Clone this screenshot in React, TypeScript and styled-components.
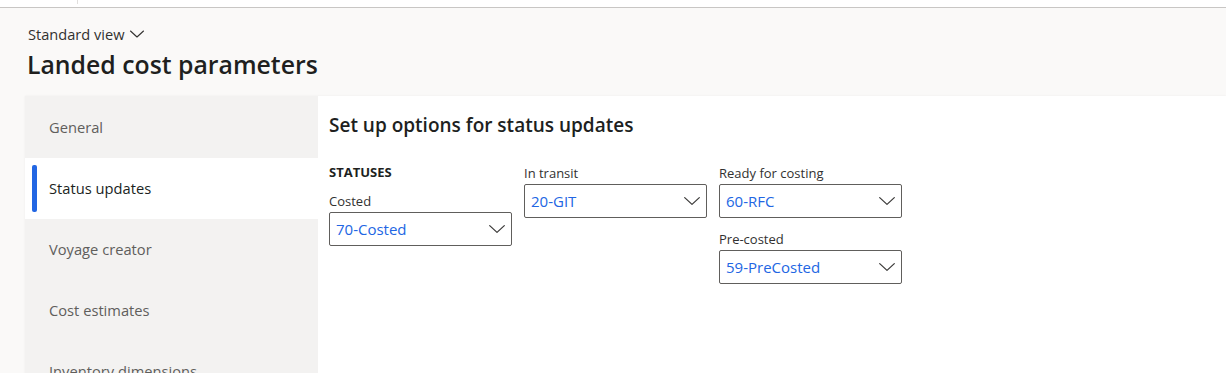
import React from 'react'
import styled, { createGlobalStyle } from 'styled-components'

const GlobalStyle = createGlobalStyle`
  html, body {
    margin: 0;
    padding: 0;
    background: #faf9f8;
    font-family: "Open Sans", "Noto Sans", sans-serif;
    color: #323130;
  }
  * { box-sizing: border-box; }
`

const tabs = ['General', 'Status updates', 'Voyage creator', 'Cost estimates', 'Inventory dimensions']

function Chevron({ size = 14, color = '#605e5c' }: { size?: number; color?: string }) {
  return (
    <svg width={size} height={size} viewBox="0 0 16 16" fill="none">
      <path d="M1.5 5 L8 11 L14.5 5" stroke={color} strokeWidth="1.1" strokeLinecap="round" strokeLinejoin="round" />
    </svg>
  )
}

interface IFieldProps {
  label: string
  value: string
}

function Field({ label, value }: IFieldProps) {
  return (
    <FieldWrap>
      <Label>{label}</Label>
      <Select>
        <span>{value}</span>
        <Chevron size={18} color="#3b3a39" />
      </Select>
    </FieldWrap>
  )
}

export default function App() {
  return (
    <Page>
      <GlobalStyle />
      <TopStrip>
        <Divider />
      </TopStrip>
      <Header>
        <ViewPicker>
          Standard view <Chevron size={16} color="#323130" />
        </ViewPicker>
        <Title>Landed cost parameters</Title>
      </Header>
      <Card>
        <Sidebar>
          {tabs.map((t, i) => (
            <Tab key={t} active={i === 1}>{t}</Tab>
          ))}
        </Sidebar>
        <Content>
          <SectionTitle>Set up options for status updates</SectionTitle>
          <Columns>
            <Column>
              <GroupTitle>STATUSES</GroupTitle>
              <Field label="Costed" value="70-Costed" />
            </Column>
            <Column>
              <Field label="In transit" value="20-GIT" />
            </Column>
            <Column>
              <Field label="Ready for costing" value="60-RFC" />
              <Field label="Pre-costed" value="59-PreCosted" />
            </Column>
          </Columns>
        </Content>
      </Card>
    </Page>
  )
}

const Page = styled.div`
  width: 1226px;
  height: 373px;
  overflow: hidden;
  display: flex;
  flex-direction: column;
`
const TopStrip = styled.div`
  height: 8px;
  background: #ffffff;
  border-bottom: 1px solid #c8c6c4;
  flex-shrink: 0;
  padding-left: 77px;
`
const Divider = styled.div`
  width: 1px;
  height: 4px;
  background: #e1dfdd;
`
const Header = styled.div`
  padding: 16px 0 0 27px;
  height: 88px;
  flex-shrink: 0;
`
const ViewPicker = styled.div`
  display: flex;
  align-items: center;
  gap: 5px;
  font-size: 14.6px;
  line-height: 20px;
  color: #323130;
  padding-left: 1px;
`
const Title = styled.h1`
  margin: 4px 0 0 0;
  font-size: 24.8px;
  line-height: 32px;
  font-weight: 600;
  color: #201f1e;
`
const Card = styled.div`
  flex: 1;
  margin-left: 25px;
  display: flex;
  background: #ffffff;
  box-shadow: 0 0 2px rgba(0, 0, 0, 0.06);
`
const Sidebar = styled.nav`
  width: 293px;
  background: #f3f2f1;
  display: flex;
  flex-direction: column;
  padding-top: 1px;
`
const Tab = styled.div<{ active?: boolean }>`
  position: relative;
  height: 61px;
  flex-shrink: 0;
  display: flex;
  align-items: center;
  padding-left: 24px;
  padding-bottom: 1px;
  font-size: 14.7px;
  color: ${p => (p.active ? '#201f1e' : '#605e5c')};
  background: ${p => (p.active ? '#ffffff' : 'transparent')};
  &::before {
    content: '';
    display: ${p => (p.active ? 'block' : 'none')};
    position: absolute;
    left: 7px;
    top: 7px;
    bottom: 7px;
    width: 5px;
    border-radius: 2px;
    background: #2266e3;
  }
`
const Content = styled.div`
  flex: 1;
  padding: 16px 0 0 11px;
`
const SectionTitle = styled.h2`
  margin: 0;
  font-size: 19px;
  line-height: 26px;
  font-weight: 600;
  color: #201f1e;
`
const Columns = styled.div`
  display: flex;
  gap: 12px;
  margin-top: 26px;
`
const Column = styled.div`
  width: 183px;
  display: flex;
  flex-direction: column;
  gap: 12px;
`
const GroupTitle = styled.div`
  font-size: 13px;
  font-weight: 700;
  line-height: 16px;
  color: #201f1e;
`
const FieldWrap = styled.div`
  display: flex;
  flex-direction: column;
`
const Label = styled.label`
  font-size: 13px;
  line-height: 18px;
  color: #323130;
  margin-bottom: 2px;
`
const Select = styled.div`
  height: 34px;
  border: 1px solid #605e5c;
  border-radius: 2px;
  display: flex;
  align-items: center;
  justify-content: space-between;
  padding: 0 5px 0 6px;
  font-size: 15px;
  color: #2266e3;
`
